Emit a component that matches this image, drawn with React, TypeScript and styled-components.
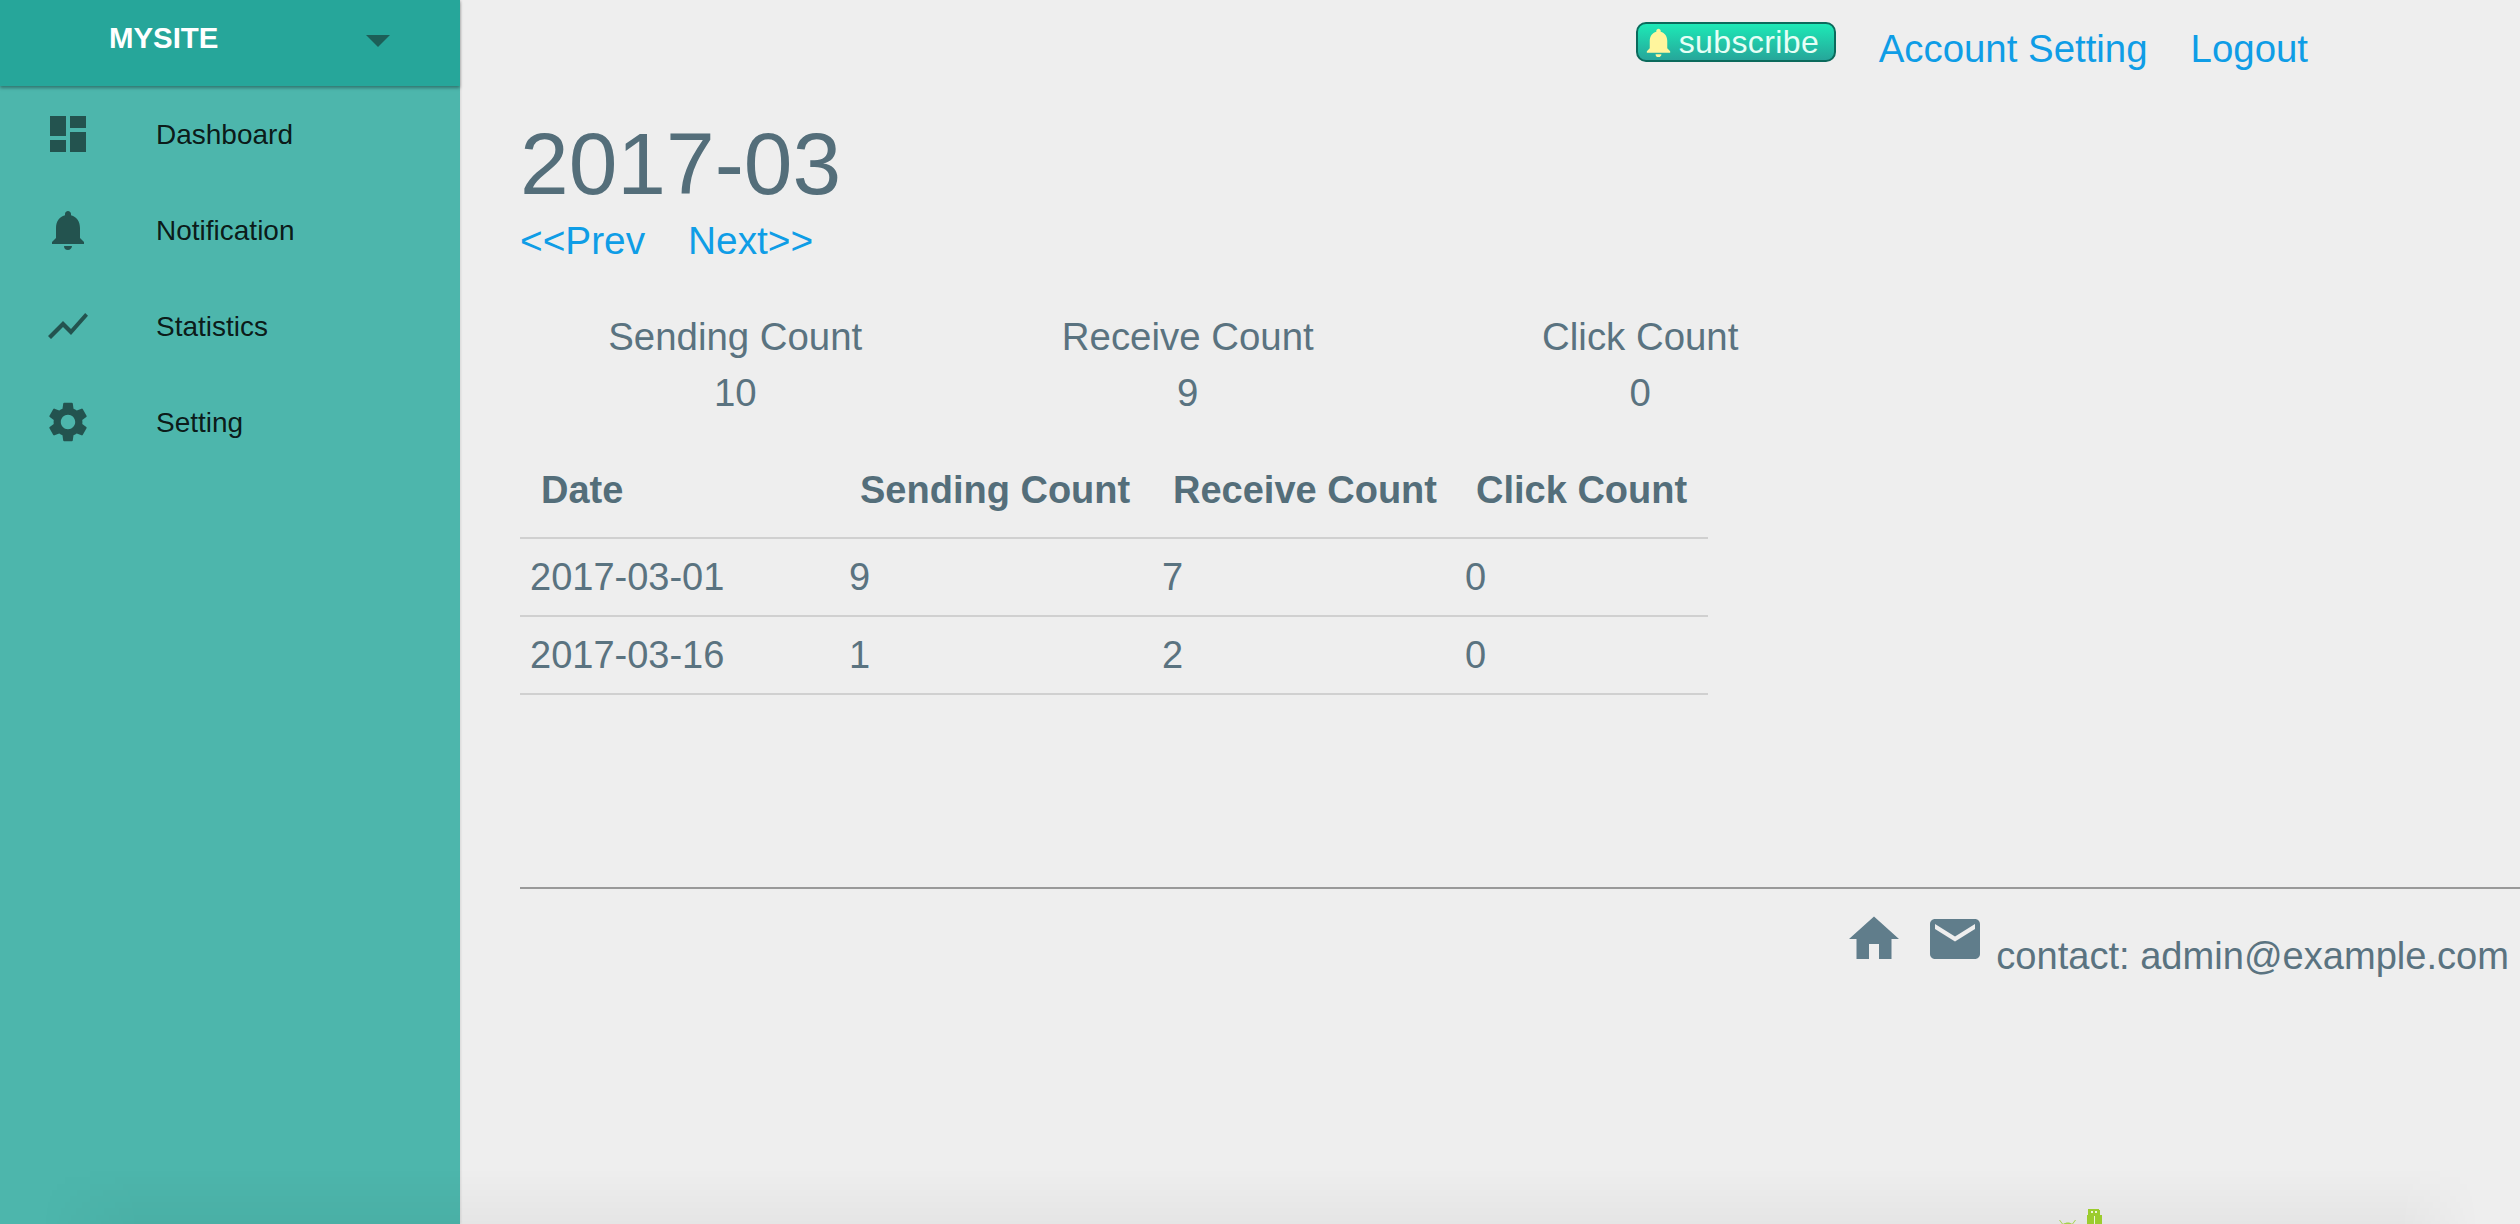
import * as React from 'react';
import styled, {createGlobalStyle} from 'styled-components';
import {MdDashboard, MdEmail, MdHome, MdNotifications, MdSettings, MdShowChart} from 'react-icons/md';

const GlobalStyle = createGlobalStyle`
    html, body {
        margin: 0;
        padding: 0;
        background: #eeeeee;
    }
    body {
        font-family: "Liberation Sans", Arial, sans-serif;
        color: #5a7380;
    }
    a {
        color: #0f9de6;
        text-decoration: none;
    }
`;

const Page = styled.div`
    position: relative;
    display: flex;
    width: 2520px;
    height: 1224px;
    overflow: hidden;
    background: #eeeeee;
`;

const Sidebar = styled.nav`
    flex: 0 0 460px;
    background: #4db6ac;
    box-shadow: 1px 0 2px rgba(0, 0, 0, 0.1);
`;

const SidebarHeader = styled.div`
    display: flex;
    align-items: center;
    justify-content: space-between;
    box-sizing: border-box;
    height: 86px;
    padding: 0 70px 11px 109px;
    background: #26a69a;
    box-shadow: 0 2px 3px rgba(0, 0, 0, 0.35);
    color: #ffffff;
    font-size: 29.4px;
    font-weight: bold;
`;

const Caret = styled.span`
    width: 0;
    height: 0;
    border-left: 12px solid transparent;
    border-right: 12px solid transparent;
    border-top: 12px solid #1c5f58;
    margin-top: 7px;
`;

const SidebarList = styled.ul`
    list-style: none;
    margin: 0;
    padding: 0;
`;

const SidebarItem = styled.li`
    display: flex;
    align-items: center;
    height: 96px;
    padding-left: 44px;
    color: rgba(0, 0, 0, 0.87);
    font-size: 28px;

    svg {
        flex: 0 0 48px;
        margin-right: 64px;
        color: rgba(0, 0, 0, 0.54);
    }
`;

const ItemLabel = styled.span`
    padding-top: 2px;
`;

const Main = styled.main`
    flex: 1;
    min-width: 0;
    padding-left: 60px;
`;

const TopBar = styled.div`
    display: flex;
    justify-content: flex-end;
    align-items: flex-start;
    gap: 43px;
    box-sizing: border-box;
    height: 114px;
    padding: 22px 212px 0 0;
`;

const SubscribeButton = styled.button`
    display: flex;
    align-items: center;
    box-sizing: border-box;
    width: 200px;
    height: 40px;
    padding: 0 0 0 3px;
    border: 2px solid #0b6a5c;
    border-radius: 10px;
    background: linear-gradient(to bottom, #1de9b6, #26a69a);
    color: #e6fff6;
    font-family: inherit;
    font-size: 32px;
    line-height: 36px;
    letter-spacing: 0.4px;

    svg {
        flex: none;
        margin-right: 3px;
        color: #fff59d;
    }
`;

const TopLink = styled.a`
    font-size: 38.4px;
    line-height: 46px;
    margin-top: 4px;
`;

const Title = styled.h1`
    margin: 0;
    color: #546e7a;
    font-size: 87.5px;
    font-weight: normal;
    line-height: 100px;
`;

const MonthNav = styled.div`
    display: flex;
    gap: 43px;
    margin-top: 4px;
    font-size: 38.8px;
    line-height: 46px;
`;

const StatsRow = styled.div`
    display: grid;
    grid-template-columns: repeat(3, 452.5px);
    margin: 45px 0 0 -11px;
    text-align: center;
    font-size: 38.4px;
    line-height: 56px;
`;

const Stat = styled.div`
    display: flex;
    flex-direction: column;
`;

const DataTable = styled.table`
    width: 1188px;
    margin-top: 22px;
    border-collapse: separate;
    border-spacing: 0;
    table-layout: fixed;
    font-size: 38px;
    line-height: 46px;
`;

const HeadCell = styled.th`
    box-sizing: border-box;
    width: ${({$width}: {$width: number}) => $width}px;
    height: 96px;
    padding: 0 0 0 21px;
    border-bottom: 2px solid #d0d0d0;
    color: #546e7a;
    text-align: left;
    font-weight: bold;
    white-space: nowrap;
`;

const BodyCell = styled.td`
    box-sizing: border-box;
    height: 78px;
    padding: 0 0 0 10px;
    border-bottom: 2px solid #d0d0d0;
`;

const FooterRule = styled.hr`
    height: 2px;
    margin: 192px 0 0;
    border: 0;
    background: #999999;
`;

const Footer = styled.footer`
    display: flex;
    justify-content: flex-end;
    align-items: baseline;
    padding: 20px 11px 0 0;
    font-size: 38.1px;
    line-height: 46px;

    svg {
        color: #607d8b;
    }
`;

const HomeLink = styled.span`
    margin-right: 21px;
`;

const MailLink = styled.span`
    margin-right: 11px;
`;

const BottomShade = styled.div`
    position: absolute;
    left: 0;
    right: 0;
    bottom: 0;
    height: 56px;
    background: linear-gradient(to bottom, rgba(0, 0, 0, 0), rgba(0, 0, 0, 0.035));
    mask-image: linear-gradient(to right, transparent 40px, #000 140px, #000 2400px, transparent 2480px);
    pointer-events: none;
`;

const Mascot = styled.svg`
    position: absolute;
    left: 2050px;
    bottom: 0;
`;

const rows = [
    {date: '2017-03-01', sending: 9, receive: 7, click: 0},
    {date: '2017-03-16', sending: 1, receive: 2, click: 0},
];

const columns = [
    {title: 'Date', width: 319},
    {title: 'Sending Count', width: 313},
    {title: 'Receive Count', width: 303},
    {title: 'Click Count', width: 253},
];

const stats = [
    {label: 'Sending Count', value: 10},
    {label: 'Receive Count', value: 9},
    {label: 'Click Count', value: 0},
];

const App = () => {
    return (
        <Page>
            <GlobalStyle />
            <Sidebar>
                <SidebarHeader>
                    MYSITE
                    <Caret />
                </SidebarHeader>
                <SidebarList>
                    <SidebarItem><MdDashboard size={48} /><ItemLabel>Dashboard</ItemLabel></SidebarItem>
                    <SidebarItem><MdNotifications size={48} /><ItemLabel>Notification</ItemLabel></SidebarItem>
                    <SidebarItem><MdShowChart size={48} /><ItemLabel>Statistics</ItemLabel></SidebarItem>
                    <SidebarItem><MdSettings size={48} /><ItemLabel>Setting</ItemLabel></SidebarItem>
                </SidebarList>
            </Sidebar>
            <Main>
                <TopBar>
                    <SubscribeButton>
                        <MdNotifications size={35} />
                        subscribe
                    </SubscribeButton>
                    <TopLink href="#">Account Setting</TopLink>
                    <TopLink href="#">Logout</TopLink>
                </TopBar>
                <Title>2017-03</Title>
                <MonthNav>
                    <a href="#">&lt;&lt;Prev</a>
                    <a href="#">Next&gt;&gt;</a>
                </MonthNav>
                <StatsRow>
                    {stats.map((stat) => (
                        <Stat key={stat.label}>
                            <span>{stat.label}</span>
                            <span>{stat.value}</span>
                        </Stat>
                    ))}
                </StatsRow>
                <DataTable>
                    <thead>
                        <tr>
                            {columns.map((column) => (
                                <HeadCell key={column.title} $width={column.width}>{column.title}</HeadCell>
                            ))}
                        </tr>
                    </thead>
                    <tbody>
                        {rows.map((row) => (
                            <tr key={row.date}>
                                <BodyCell>{row.date}</BodyCell>
                                <BodyCell>{row.sending}</BodyCell>
                                <BodyCell>{row.receive}</BodyCell>
                                <BodyCell>{row.click}</BodyCell>
                            </tr>
                        ))}
                    </tbody>
                </DataTable>
                <FooterRule />
                <Footer>
                    <HomeLink><MdHome size={60} /></HomeLink>
                    <MailLink><MdEmail size={60} /></MailLink>
                    contact: admin@example.com
                </Footer>
            </Main>
            <BottomShade />
            <Mascot width="56" height="16" viewBox="0 0 56 16">
                <path d="M38 1h11v1h1v5h2v9H37V7h1V2h0z" fill="#9ccc2e" />
                <path d="M41 3h2v2h-2zM45 3h2v2h-2zM44 8h1v8h-1z" fill="#eef5d8" />
                <path d="M9 12l3 4h1l-3-4zM26 12l-3 4h-1l3-4zM13 16c3-2 7-2 9 0z" fill="#a5d24a" />
            </Mascot>
        </Page>
    );
};

export default App;
